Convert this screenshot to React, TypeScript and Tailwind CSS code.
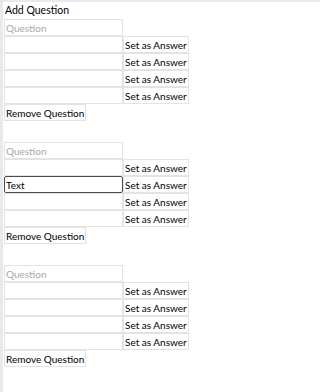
import { useState } from "react";

const font = { fontFamily: 'Lato, "Open Sans", sans-serif' };

const boxCls = "h-[17px] border border-[#e3e3e3] bg-white px-px text-[10px] leading-none text-black";
const inputCls = "h-[17px] w-[119px] bg-white px-px text-[10px] leading-none text-black outline-none";

function QuestionBlock({ focused }: { focused?: number }) {
  const [answers, setAnswers] = useState<string[]>(
    [0, 1, 2, 3].map((i) => (i === focused ? "Text" : ""))
  );

  return (
    <div className="flex flex-col items-start">
      <input placeholder="Question" className={`${inputCls} border border-[#e3e3e3] placeholder:text-[#a8a8a8]`} />
      {answers.map((a, i) => (
        <div key={i} className="flex">
          <input
            value={a}
            onChange={(e) => setAnswers((prev) => prev.map((p, j) => (j === i ? e.target.value : p)))}
            className={
              i === focused
                ? `${inputCls} rounded-[2px] border border-[#4a4a4a]`
                : `${inputCls} border border-[#e3e3e3]`
            }
          />
          <button className={boxCls}>Set as Answer</button>
        </div>
      ))}
      <button className={boxCls}>Remove Question</button>
    </div>
  );
}

export default function App() {
  return (
    <div className="flex h-[392px] flex-col items-start border-l-[3px] border-t-2 border-[#e6e9ee] bg-white pl-px" style={font}>
      <button className="h-[17px] bg-white px-px text-[10.5px] leading-none text-black">Add Question</button>
      <div className="flex flex-col gap-[21px]">
        <QuestionBlock />
        <QuestionBlock focused={1} />
        <QuestionBlock />
      </div>
    </div>
  );
}
